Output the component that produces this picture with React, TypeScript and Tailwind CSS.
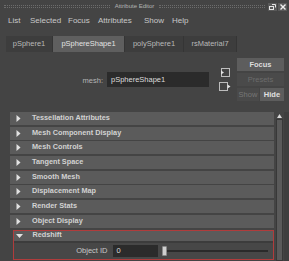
import React from 'react'

const rows = [
  'Tessellation Attributes',
  'Mesh Component Display',
  'Mesh Controls',
  'Tangent Space',
  'Smooth Mesh',
  'Displacement Map',
  'Render Stats',
  'Object Display',
]

const menus: [string, string][] = [
  ['List', 'w-[22px]'],
  ['Selected', 'w-[38px]'],
  ['Focus', 'w-[30px]'],
  ['Attributes', 'w-[46px]'],
  ['Show', 'w-[28px]'],
  ['Help', 'w-[24px]'],
]

const tabs: [string, string][] = [
  ['pSphere1', 'w-[47px]'],
  ['pSphereShape1', 'w-[72px]'],
  ['polySphere1', 'w-[59px]'],
  ['rsMaterial7', 'w-[53px]'],
]

function RightArrow() {
  return (
    <svg width="5" height="7" viewBox="0 0 5 7" className="shrink-0">
      <path d="M0.5 0 L4.5 3.5 L0.5 7 Z" fill="#e2e2e2" />
    </svg>
  )
}

function DownArrow() {
  return (
    <svg width="7" height="4" viewBox="0 0 7 4" className="shrink-0">
      <path d="M0 0 L7 0 L3.5 4 Z" fill="#e2e2e2" />
    </svg>
  )
}

function FrameRow({ title }: { title: string }) {
  return (
    <div className="flex h-[13px] items-center bg-[#5b5b5b] pl-[6px]">
      <RightArrow />
      <span className="ml-[11px] text-[7.3px] font-bold text-[#d2d2d2]">{title}</span>
    </div>
  )
}

export default function App() {
  return (
    <div
      className="flex h-[261px] w-[289px] flex-col overflow-hidden bg-[#444444] text-[#c8c8c8]"
      style={{ fontFamily: '"Liberation Sans", Arial, sans-serif' }}
    >
      {/* title bar */}
      <div className="flex h-[13px] items-center pl-[4px] pr-[2px]">
        <div className="h-[3px] flex-1 border-y border-dotted border-[#6c6c6c]" />
        <span className="mx-[5px] text-[6px] text-[#b4b4b4]">Attribute Editor</span>
        <div className="h-[3px] flex-1 border-y border-dotted border-[#6c6c6c]" />
        <div className="ml-[3px] flex gap-[1px]">
          <div className="flex h-[8px] w-[9px] items-center justify-center bg-[#5a5a5a]">
            <svg width="7" height="6" viewBox="0 0 7 6">
              <rect x="0.5" y="2.5" width="4" height="3" fill="none" stroke="#e6e6e6" strokeWidth="1" />
              <path d="M3 0.5 H6.5 V3.5" fill="none" stroke="#e6e6e6" strokeWidth="1" />
            </svg>
          </div>
          <div className="flex h-[8px] w-[9px] items-center justify-center bg-[#5a5a5a]">
            <svg width="6" height="6" viewBox="0 0 6 6">
              <path d="M0.5 0.5 L5.5 5.5 M5.5 0.5 L0.5 5.5" stroke="#f0f0f0" strokeWidth="1.4" />
            </svg>
          </div>
        </div>
      </div>

      {/* menu bar */}
      <div className="flex h-[15px] items-center pl-[8px] text-[8px] text-[#c8c8c8]">
        {menus.map(([m, w]) => (
          <span key={m} className={w}>
            {m}
          </span>
        ))}
      </div>

      {/* tabs */}
      <div className="mt-[8px] flex h-[16px] pl-[6px]">
        {tabs.map(([t, w]) => (
          <div
            key={t}
            className={`flex items-center justify-center border-r border-[#353535] text-[7.5px] ${w} ${
              t === 'pSphereShape1' ? 'bg-[#5f5f5f] text-[#e2e2e2]' : 'bg-[#3d3d3d] text-[#b8b8b8]'
            }`}
          >
            {t}
          </div>
        ))}
      </div>

      {/* mesh area */}
      <div className="flex h-[60px]">
        <div className="flex w-[209px] items-start justify-end pt-[20px]">
          <span className="mr-[4px] mt-[3px] text-[7.5px] text-[#b4b4b4]">mesh:</span>
          <div className="flex h-[15px] w-[102px] items-center bg-[#2b2b2b] pl-[4px] text-[7.5px] text-[#dcdcdc]">
            pSphereShape1
          </div>
        </div>
        <div className="ml-[10px] flex w-[12px] flex-col gap-[5px] pt-[16px]">
          <svg width="12" height="9" viewBox="0 0 12 9">
            <rect x="2.5" y="0.5" width="8" height="8" fill="none" stroke="#bdbdbd" strokeWidth="1" />
            <path d="M2 2.5 L5 4.5 L2 6.5 Z" fill="#e6e6e6" />
          </svg>
          <svg width="12" height="9" viewBox="0 0 12 9">
            <rect x="0.5" y="0.5" width="8" height="8" fill="none" stroke="#bdbdbd" strokeWidth="1" />
            <path d="M8.5 2.5 L11.5 4.5 L8.5 6.5 Z" fill="#e6e6e6" />
          </svg>
        </div>
        <div className="ml-[6px] flex w-[47px] flex-col gap-[2px] pt-[6px] text-[7.5px]">
          <div className="flex h-[13px] items-center justify-center bg-[#5d5d5d] font-bold text-[#dcdcdc]">
            Focus
          </div>
          <div className="flex h-[13px] items-center justify-center bg-[#4a4a4a] text-[#6c6c6c]">
            Presets
          </div>
          <div className="flex h-[13px] gap-[1px]">
            <div className="flex w-[22px] items-center justify-center bg-[#4a4a4a] text-[#777777]">
              Show
            </div>
            <div className="flex flex-1 items-center justify-center bg-[#5d5d5d] font-bold text-[#e0e0e0]">
              Hide
            </div>
          </div>
        </div>
      </div>

      {/* frames + scrollbar */}
      <div className="flex min-h-0 flex-1">
        <div className="ml-[10px] flex w-[264px] flex-col gap-[1.7px]">
          {rows.map((r) => (
            <FrameRow key={r} title={r} />
          ))}
          <div className="ml-[2.5px] flex flex-col border border-[#b03c3c]">
            <div className="flex h-[12px] items-center border-b-2 border-[#3c3c3c] bg-[#5b5b5b] pl-[2px]">
              <DownArrow />
              <span className="ml-[10px] text-[7.3px] font-bold text-[#d2d2d2]">Redshift</span>
            </div>
            <div className="flex h-[16px] items-center bg-[#474747]">
              <span className="w-[94px] text-right text-[7.5px] text-[#c8c8c8]">Object ID</span>
              <div className="ml-[5px] flex h-[12px] w-[45px] items-center bg-[#2b2b2b] pl-[4px] text-[7.5px] text-[#dcdcdc]">
                0
              </div>
              <div className="ml-[4px] h-[10px] w-[5px] rounded-[1px] border border-[#8a8a8a] bg-[#cfcfcf]" />
              <div className="h-[2px] w-[101px] bg-[#2a2a2a]" />
            </div>
          </div>
        </div>
        <div className="ml-[2px] flex w-[7px] flex-col">
          <div className="flex h-[7px] items-center justify-center">
            <svg width="5" height="4" viewBox="0 0 5 4">
              <path d="M0 4 L2.5 0 L5 4 Z" fill="#d8d8d8" />
            </svg>
          </div>
          <div className="flex-1 border border-[#383838] bg-[#5a5a5a]" />
        </div>
        <div className="ml-[1px] w-[5px] bg-[#3e3e3e]" />
      </div>
    </div>
  )
}
